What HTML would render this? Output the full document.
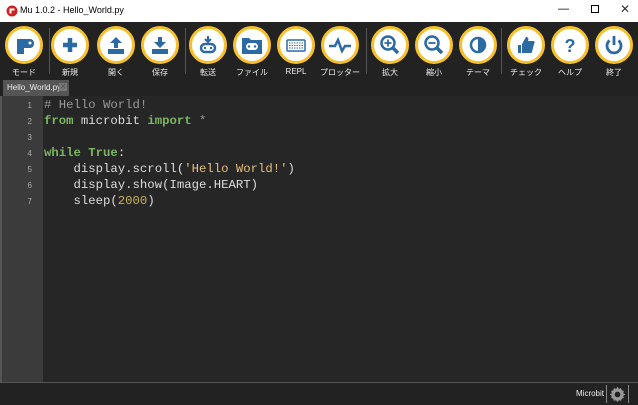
<!DOCTYPE html>
<html><head><meta charset="utf-8"><style>
*{margin:0;padding:0;box-sizing:border-box}
body{width:638px;height:405px;overflow:hidden;background:#fff;font-family:"Liberation Sans","Noto Sans CJK JP",sans-serif;position:relative}
.title{position:absolute;left:0;top:0;width:638px;height:22px;background:#fff;font-size:9px;color:#000}
.tb{position:absolute;left:0;top:22px;width:638px;height:58px;background:#222}
.btn{position:absolute;top:4px;width:38px;height:38px;border-radius:50%;background:#fff;border:3px solid #f6c12c}
.btn svg{position:absolute;left:0;top:0;width:32px;height:32px}
.lbl{position:absolute;top:45px;width:50px;text-align:center;color:#eee;font-size:8px}
.sep{position:absolute;top:6px;width:1px;height:46px;background:#555}
.tabbar{position:absolute;left:0;top:80px;width:638px;height:16px;background:#222}
.tab{position:absolute;left:3px;top:80px;width:66px;height:16px;background:#555;color:#eee;font-size:8px;line-height:16px;padding-left:4px}
.gut{position:absolute;left:0;top:96px;width:43px;height:286px;background:#3b3b3b;border-left:2px solid #555}
.ed{position:absolute;left:43px;top:96px;width:595px;height:286px;background:#262626}
.ln{position:absolute;left:0;width:32px;text-align:right;color:#aaa;font-size:8px;font-family:"Liberation Sans",sans-serif}
.code{position:absolute;left:44px;top:97px;font-family:"Liberation Mono",monospace;font-size:12.3px;line-height:16px;color:#ddd;white-space:pre}
.status{position:absolute;left:0;top:382px;width:638px;height:23px;background:#222;border-top:1px solid #555}
</style></head><body>
<div class="title">
<svg style="position:absolute;left:6px;top:5px" width="12" height="12"><circle cx="6" cy="6" r="5.5" fill="#c22"/><rect x="3.5" y="3.5" width="5" height="5" fill="#fff"/><rect x="5.5" y="5.5" width="3" height="3" fill="#c22"/></svg>
<span style="position:absolute;left:20px;top:5px">Mu 1.0.2 - Hello_World.py</span>
<span style="position:absolute;left:558px;top:3px;font-size:11px">—</span>
<span style="position:absolute;left:591px;top:5px;width:8px;height:8px;border:1px solid #000"></span>
<span style="position:absolute;left:620px;top:2px;font-size:12px;color:#333">✕</span>
</div>
<div class="tb">
<div class="sep" style="left:49px"></div><div class="sep" style="left:185px"></div><div class="sep" style="left:366px"></div><div class="sep" style="left:501px"></div>

<div class="btn" style="left:5px"><svg viewBox="0 0 32 32"><path d="M9 10h13a4 4 0 0 1 4 4v1a4 4 0 0 1-4 4h-6v6H9z" fill="#2c6aa3"/><circle cx="22" cy="14" r="1.5" fill="#fff"/></svg></div>
<div class="lbl" style="left:-1px">モード</div>

<div class="btn" style="left:51px"><svg viewBox="0 0 32 32"><path d="M16 9v14M9 16h14" stroke="#2c6aa3" stroke-width="4.5"/></svg></div>
<div class="lbl" style="left:45px">新規</div>

<div class="btn" style="left:97px"><svg viewBox="0 0 32 32"><path d="M16 8l-6 6h4v5h4v-5h4z" fill="#2c6aa3"/><rect x="8" y="20" width="16" height="5" fill="#2c6aa3"/></svg></div>
<div class="lbl" style="left:91px">開く</div>

<div class="btn" style="left:141px"><svg viewBox="0 0 32 32"><path d="M16 19l-6-6h4V8h4v5h4z" fill="#2c6aa3"/><rect x="8" y="20" width="16" height="5" fill="#2c6aa3"/></svg></div>
<div class="lbl" style="left:135px">保存</div>

<div class="btn" style="left:189px"><svg viewBox="0 0 32 32"><path d="M16 7v6M13 10l3 3 3-3" stroke="#2c6aa3" stroke-width="2" fill="none"/><rect x="9" y="15" width="14" height="8" rx="4" fill="none" stroke="#2c6aa3" stroke-width="2.5"/><circle cx="13" cy="19" r="1.2" fill="#2c6aa3"/><circle cx="19" cy="19" r="1.2" fill="#2c6aa3"/></svg></div>
<div class="lbl" style="left:183px">転送</div>

<div class="btn" style="left:233px"><svg viewBox="0 0 32 32"><path d="M6 9h7l2 2h11v14H6z" fill="#2c6aa3"/><rect x="10" y="14" width="12" height="7" rx="3.5" fill="#fff"/><circle cx="13" cy="17.5" r="1.2" fill="#2c6aa3"/><circle cx="19" cy="17.5" r="1.2" fill="#2c6aa3"/></svg></div>
<div class="lbl" style="left:227px">ファイル</div>

<div class="btn" style="left:277px"><svg viewBox="0 0 32 32"><rect x="7" y="11" width="18" height="11" rx="1" fill="none" stroke="#2c6aa3" stroke-width="1.5"/><path d="M9 14h14M9 16.5h14M9 19h14" stroke="#2c6aa3" stroke-width="1.1" stroke-dasharray="1.5 1"/></svg></div>
<div class="lbl" style="left:271px">REPL</div>

<div class="btn" style="left:321px"><svg viewBox="0 0 32 32"><path d="M5 17h6l3-6 4 11 3-5h6" stroke="#2c6aa3" stroke-width="2.5" fill="none"/></svg></div>
<div class="lbl" style="left:315px">プロッター</div>

<div class="btn" style="left:371px"><svg viewBox="0 0 32 32"><circle cx="14" cy="14" r="6.5" fill="none" stroke="#2c6aa3" stroke-width="2.5"/><path d="M19 19l5 5" stroke="#2c6aa3" stroke-width="3.5"/><path d="M14 10.5v7M10.5 14h7" stroke="#2c6aa3" stroke-width="1.8"/></svg></div>
<div class="lbl" style="left:365px">拡大</div>

<div class="btn" style="left:415px"><svg viewBox="0 0 32 32"><circle cx="14" cy="14" r="6.5" fill="none" stroke="#2c6aa3" stroke-width="2.5"/><path d="M19 19l5 5" stroke="#2c6aa3" stroke-width="3.5"/><path d="M10.5 14h7" stroke="#2c6aa3" stroke-width="1.8"/></svg></div>
<div class="lbl" style="left:409px">縮小</div>

<div class="btn" style="left:459px"><svg viewBox="0 0 32 32"><circle cx="16" cy="16" r="7" fill="none" stroke="#2c6aa3" stroke-width="2.5"/><path d="M16 9a7 7 0 0 1 0 14z" fill="#2c6aa3"/></svg></div>
<div class="lbl" style="left:453px">テーマ</div>

<div class="btn" style="left:507px"><svg viewBox="0 0 32 32"><rect x="8" y="16" width="3" height="8" fill="#2c6aa3"/><path d="M12 15l4-7c2 0 3 1 2 4h5c2 0 2 2 1 3l-2 8c0 1-1 1-2 1h-8z" fill="#2c6aa3"/></svg></div>
<div class="lbl" style="left:501px">チェック</div>

<div class="btn" style="left:551px"><svg viewBox="0 0 32 32"><text x="16" y="23" text-anchor="middle" font-family="Liberation Sans" font-weight="bold" font-size="18" fill="#2c6aa3">?</text></svg></div>
<div class="lbl" style="left:545px">ヘルプ</div>

<div class="btn" style="left:595px"><svg viewBox="0 0 32 32"><path d="M11.5 11.5a7 7 0 1 0 9 0" fill="none" stroke="#2c6aa3" stroke-width="2.8"/><path d="M16 7v9" stroke="#2c6aa3" stroke-width="2.8"/></svg></div>
<div class="lbl" style="left:589px">終了</div>
</div>
<div class="tabbar"></div>
<div class="tab">Hello_World.py</div>
<span style="position:absolute;left:59px;top:83px;width:8px;height:8px;background:#777;color:#555;font-size:8px;line-height:8px;text-align:center">✕</span>
<div class="gut"></div>
<div class="ed"></div>
<div class="ln" style="top:101px">1</div><div class="ln" style="top:117px">2</div><div class="ln" style="top:133px">3</div><div class="ln" style="top:149px">4</div><div class="ln" style="top:165px">5</div><div class="ln" style="top:181px">6</div><div class="ln" style="top:197px">7</div>
<div class="code"><span style="color:#999"># Hello World!</span>
<span style="color:#7bb661;font-weight:bold">from</span> microbit <span style="color:#7bb661;font-weight:bold">import</span> <span style="color:#999">*</span>

<span style="color:#7bb661;font-weight:bold">while</span> <span style="color:#7bb661;font-weight:bold">True</span>:
    display.scroll(<span style="color:#e5c07b">'Hello World!'</span>)
    display.show(Image.HEART)
    sleep(<span style="color:#c9b458">2000</span>)</div>
<div class="status">
<span style="position:absolute;left:576px;top:6px;font-size:8px;color:#eee">Microbit</span>
<div style="position:absolute;left:606px;top:2px;width:1px;height:18px;background:#888"></div>
<svg style="position:absolute;left:609px;top:3px" width="17" height="17" viewBox="0 0 24 24"><path d="M12 1l2 3 3-1 1 3 3 1-1 3 3 2-3 2 1 3-3 1-1 3-3-1-2 3-2-3-3 1-1-3-3-1 1-3-3-2 3-2-1-3 3-1 1-3 3 1z" fill="#999"/><circle cx="12" cy="12" r="4" fill="#222"/></svg>
<div style="position:absolute;left:628px;top:2px;width:1px;height:18px;background:#888"></div>
</div>
</body></html>
